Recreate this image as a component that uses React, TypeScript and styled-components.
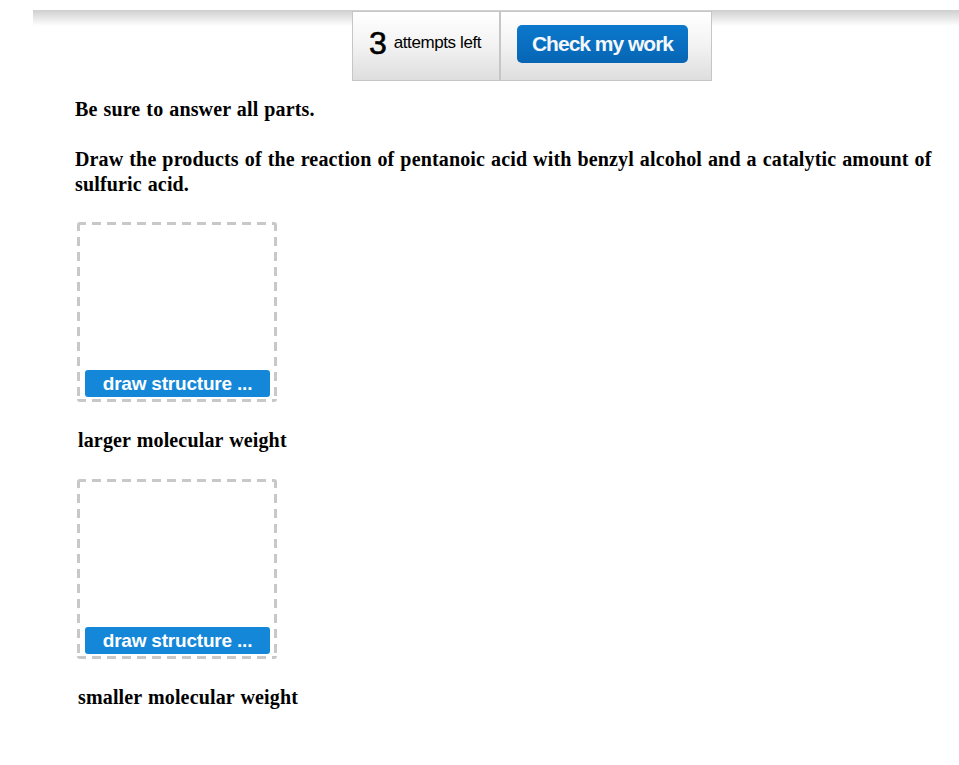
import React from "react";
import styled, { createGlobalStyle } from "styled-components";

const Global = createGlobalStyle`
  html, body { margin: 0; padding: 0; background: #fff; }
  body { font-family: "Liberation Serif", "Times New Roman", serif; color: #000; }
`;

const Page = styled.div`
  width: 959px;
  padding-top: 10px;
`;

const HeaderBar = styled.div`
  margin-left: 33px;
  position: relative;
  display: flex;
  &::before {
    content: "";
    position: absolute;
    left: 0;
    right: 0;
    top: 0;
    height: 16px;
    background: linear-gradient(#cfcfcf, #ffffff);
    z-index: 0;
  }
`;

const Toolbox = styled.div`
  position: relative;
  z-index: 1;
  display: flex;
  margin: 1px 0 0 319px;
  border: 1px solid #c6c6c6;
  height: 68px;
  background: linear-gradient(#ffffff 0%, #f4f4f4 45%, #dedede 100%);
`;

const Attempts = styled.div`
  width: 148px;
  display: flex;
  align-items: center;
  justify-content: center;
  gap: 8px;
  border-right: 2px solid #c6c6c6;
  font-family: "Liberation Sans", Arial, sans-serif;
  padding: 0 2px 6px 0;
  box-sizing: border-box;
`;

const Count = styled.span`
  font-size: 32px;
  font-weight: 400;
  -webkit-text-stroke: 0.6px #000;
  letter-spacing: -1px;
`;

const AttemptsText = styled.span`
  font-size: 17px;
  letter-spacing: -0.4px;
`;

const CheckCell = styled.div`
  width: 210px;
  display: flex;
  align-items: center;
  justify-content: center;
  padding: 0 7px 4px 0;
  box-sizing: border-box;
`;

const CheckButton = styled.button`
  width: 171px;
  height: 38px;
  border: none;
  border-radius: 5px;
  background: linear-gradient(#0b78cc, #0765b4);
  color: #f4f8fc;
  font-family: "Liberation Sans", Arial, sans-serif;
  font-weight: 700;
  font-size: 21px;
  letter-spacing: -1px;
  padding: 0;
`;

const Content = styled.div`
  padding: 16px 24px 0 75px;
  font-weight: 700;
  font-size: 20px;
  line-height: 25px;
  letter-spacing: 0.15px;
  word-spacing: 0.8px;
`;

const Para = styled.p`
  margin: 0 0 25px 0;
`;

const Part = styled.div`
  display: flex;
  flex-direction: column;
  align-items: flex-start;
  margin-left: 2px;
`;

const dash = "#c8c8c8";

const DrawBox = styled.div`
  width: 200px;
  height: 180px;
  box-sizing: border-box;
  border-radius: 3px;
  display: flex;
  align-items: flex-end;
  padding: 0 6px 5px 8px;
  background-image:
    repeating-linear-gradient(90deg, ${dash} 0 9px, transparent 9px 15px),
    repeating-linear-gradient(90deg, ${dash} 0 9px, transparent 9px 15px),
    repeating-linear-gradient(180deg, ${dash} 0 9px, transparent 9px 15px),
    repeating-linear-gradient(180deg, ${dash} 0 9px, transparent 9px 15px);
  background-size: 100% 3px, 100% 3px, 3px 100%, 3px 100%;
  background-position: 0 0, 0 100%, 0 0, 100% 0;
  background-repeat: no-repeat;
`;

const DrawButton = styled.button`
  width: 185px;
  height: 27px;
  border: none;
  border-radius: 3px;
  background: #1587d8;
  color: #fff;
  font-family: "Liberation Sans", Arial, sans-serif;
  font-weight: 700;
  font-size: 19px;
  letter-spacing: -0.2px;
  padding: 0;
`;

const Label = styled.div`
  margin: 26px 0 26px 1px;
  line-height: 25px;
`;

export default function App() {
  return (
    <Page>
      <Global />
      <HeaderBar>
        <Toolbox>
          <Attempts>
            <Count>3</Count>
            <AttemptsText>attempts left</AttemptsText>
          </Attempts>
          <CheckCell>
            <CheckButton>Check my work</CheckButton>
          </CheckCell>
        </Toolbox>
      </HeaderBar>
      <Content>
        <Para>Be sure to answer all parts.</Para>
        <Para>
          Draw the products of the reaction of pentanoic acid with benzyl alcohol and a catalytic amount of
          sulfuric acid.
        </Para>
        <Part>
          <DrawBox>
            <DrawButton>draw structure ...</DrawButton>
          </DrawBox>
          <Label>larger molecular weight</Label>
          <DrawBox>
            <DrawButton>draw structure ...</DrawButton>
          </DrawBox>
          <Label>smaller molecular weight</Label>
        </Part>
      </Content>
    </Page>
  );
}
